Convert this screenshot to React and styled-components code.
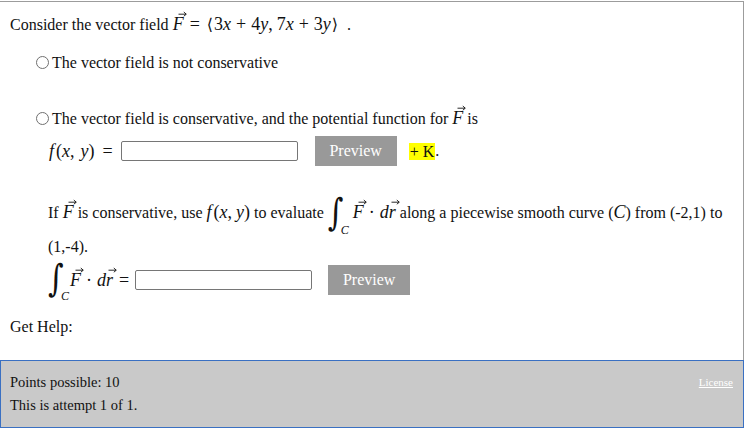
import React from 'react'
import styled, { createGlobalStyle } from 'styled-components'

const GlobalStyle = createGlobalStyle`
  body {
    margin: 0;
    background: #fff;
    font-family: "Liberation Serif", "Times New Roman", serif;
    font-size: 16px;
    color: #111;
  }
`

const Page = styled.div`
  width: 744px;
`

const Question = styled.div`
  margin-top: 1px;
  border-top: 1px solid #9c9c9c;
  border-right: 1px solid #9c9c9c;
  padding: 0 10px 23px 10px;
`

const Line = styled.div`
  line-height: ${props => props.lh || 20}px;
  margin-top: ${props => props.mt || 0}px;
  margin-left: ${props => props.indent || 0}px;
  white-space: nowrap;
`

const Radio = styled.span`
  display: inline-block;
  width: 11px;
  height: 11px;
  border: 1px solid #707070;
  border-radius: 50%;
  margin-right: 3px;
  vertical-align: -1px;
`

const Row = styled.div`
  display: flex;
  align-items: center;
  height: ${props => props.h}px;
  margin-top: ${props => props.mt || 0}px;
  margin-left: ${props => props.indent || 0}px;
`

const Math = styled.span`
  font-family: "Liberation Serif", "DejaVu Serif", serif;
  font-size: 18px;
  line-height: 1;
  white-space: nowrap;
`

const Mi = styled.i`
  font-style: italic;
  margin-right: ${props => props.kern || 0}px;
`

const Op = styled.span`
  margin: 0 ${props => props.sp || 5}px;
`

const Bracket = styled.span`
  font-family: "DejaVu Serif", serif;
  font-size: 16px;
  margin: 0 ${props => props.sp || 1}px;
`

const VecWrap = styled.span`
  position: relative;
  display: inline-block;
  font-style: italic;
  line-height: 1;
`

const Arrow = styled.svg`
  position: absolute;
  left: ${props => props.left || 4}px;
  top: -4px;
`

const Answer = styled.input`
  box-sizing: border-box;
  width: ${props => props.w}px;
  height: 20px;
  border: 1px solid #767676;
  border-radius: 2px;
  padding: 1px 2px;
  margin: 0;
  background: #fff;
`

const PreviewButton = styled.button`
  height: 30px;
  width: 82px;
  border: none;
  background: #999999;
  color: #fff;
  font-family: "Liberation Serif", "Times New Roman", serif;
  font-size: 16px;
  margin-left: ${props => props.ml}px;
  padding: 0;
`

const Highlight = styled.span`
  background: #ffff00;
  margin-left: 12px;
  line-height: 17px;
  padding: 0 1px;
`

const Integral = styled.span`
  position: relative;
  display: inline-block;
  vertical-align: middle;
  width: ${props => props.w || 22}px;
  height: 38px;
`

const IntSign = styled.span`
  position: absolute;
  left: 0;
  top: -2px;
  font-family: "DejaVu Serif", serif;
  font-style: italic;
  font-size: 30px;
  line-height: 38px;
  transform: scaleY(1.25);
`

const IntSub = styled.i`
  position: absolute;
  left: 13px;
  bottom: -3px;
  font-size: 12px;
  line-height: 12px;
`

const Footer = styled.div`
  display: flex;
  justify-content: space-between;
  background: #c9c9c9;
  border: 1px solid #3a70c2;
  padding: 10px 10px 10px 9px;
  line-height: 23px;
  font-size: 14.5px;
`

const License = styled.a`
  color: #fff;
  font-size: 11px;
  text-decoration: underline;
`

function Vec({ children, left }) {
  return (
    <VecWrap>
      {children}
      <Arrow left={left} width="9" height="6" viewBox="0 0 9 6">
        <path d="M0.5 3.2 H8 M5.8 1 L8.3 3.2 L5.8 5.2" stroke="#111" strokeWidth="0.9" fill="none" />
      </Arrow>
    </VecWrap>
  )
}

function LineIntegral({ w }) {
  return (
    <Integral w={w}>
      <IntSign>∫</IntSign>
      <IntSub>C</IntSub>
    </Integral>
  )
}

function FdotDr() {
  return (
    <>
      <Vec left={5}>F</Vec>
      <Op sp={5}>·</Op>
      <Mi>d</Mi>
      <Vec left={2}>r</Vec>
    </>
  )
}

export default function App() {
  return (
    <Page>
      <GlobalStyle />
      <Question>
        <Line mt={13}>
          Consider the vector field{' '}
          <Math>
            <Vec left={5}>F</Vec>
            <Op sp={6}>=</Op>
            <Bracket>⟨</Bracket>3<Mi>x</Mi>
            <Op>+</Op>4<Mi>y</Mi>,<Op sp={2} />7<Mi>x</Mi>
            <Op>+</Op>3<Mi>y</Mi>
            <Bracket>⟩</Bracket>
          </Math>
          {' '}&nbsp;.
        </Line>

        <Line mt={18} indent={26}>
          <Radio />The vector field is not conservative
        </Line>

        <Line mt={36} indent={26}>
          <Radio />The vector field is conservative, and the potential function for{' '}
          <Math><Vec left={5}>F</Vec></Math> is
        </Line>

        <Row h={30} mt={7} indent={39}>
          <Math>
            <Mi kern={2}>f</Mi>(<Mi>x</Mi>,<Op sp={3} /><Mi>y</Mi>)<Op sp={8}>=</Op>
          </Math>
          <Answer w={177} type="text" />
          <PreviewButton ml={17}>Preview</PreviewButton>
          <Highlight>+ K</Highlight>.
        </Row>

        <Line lh={40} mt={27} indent={38}>
          If <Math><Vec left={5}>F</Vec></Math> is conservative, use{' '}
          <Math><Mi kern={2}>f</Mi>(<Mi>x</Mi>,<Op sp={2} /><Mi>y</Mi>)</Math> to evaluate{' '}
          <LineIntegral w={25} />
          <Math><FdotDr /></Math> along a piecewise smooth curve (<Math><Mi>C</Mi></Math>) from (-2,1) to
        </Line>
        <Line mt={4} indent={38}>(1,-4).</Line>

        <Row h={36} mt={5} indent={38}>
          <LineIntegral w={22} />
          <Math>
            <FdotDr />
            <Op sp={6}>=</Op>
          </Math>
          <Answer w={177} type="text" />
          <PreviewButton ml={16}>Preview</PreviewButton>
        </Row>

        <Line mt={19}>Get Help:</Line>
      </Question>

      <Footer>
        <div>
          <div>Points possible: 10</div>
          <div>This is attempt 1 of 1.</div>
        </div>
        <License href="#">License</License>
      </Footer>
    </Page>
  )
}
